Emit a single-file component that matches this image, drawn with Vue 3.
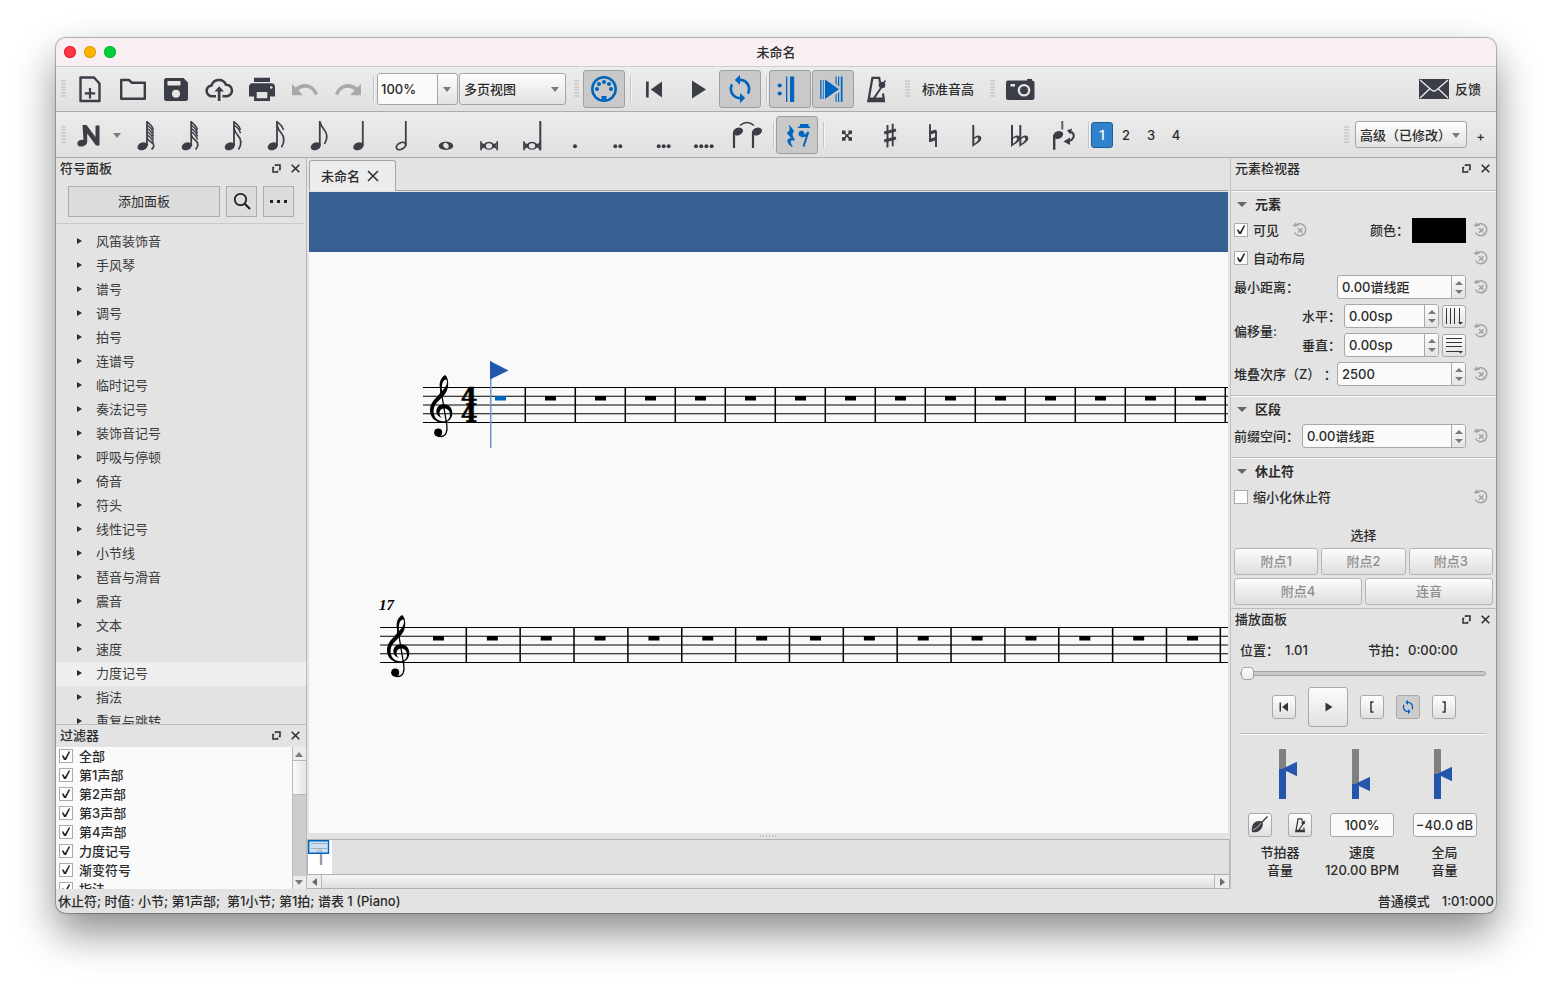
<script setup>
import { ref } from 'vue'

const sync =
  '<path transform="scale(1.3) translate(-12 -12)" fill="currentColor" d="M12 4V1L8 5l4 4V6c3.31 0 6 2.69 6 6 0 1.01-.25 1.97-.7 2.8l1.46 1.46C19.54 15.03 20 13.57 20 12c0-4.42-3.58-8-8-8zm0 14c-3.31 0-6-2.69-6-6 0-1.01.25-1.97.7-2.8L5.24 7.74C4.46 8.97 4 10.43 4 12c0 4.42 3.58 8 8 8v3l4-4-4-4v3z"/>'
const metro =
  '<path fill="none" stroke="currentColor" stroke-width="2.2" d="M4 -6.500L3.200 -11.200H-3.600L-7.700 12.200H8L7 4.500"/><path fill="currentColor" d="M-7.500 8.500H7.500V13H-8.500zM-3 8.800L5.500 -3.500 7 -2.500-.5 8.800z"/><circle cx="6" cy="-4" r="3.300" fill="currentColor"/><path stroke="currentColor" stroke-width="1.500" d="M6 -4L9.500 -8.500"/>'

const fileTools = [
  { label: '新建', svg: '<path fill="none" stroke="currentColor" stroke-width="2.400" stroke-linejoin="round" d="M-9.500 -11.500H4L9.500 -5.500V12H-9.500z"/><path stroke="currentColor" stroke-width="2.200" d="M0 -1V9.500M-5.200 4.300H5.200"/>' },
  { label: '打开', svg: '<path fill="none" stroke="currentColor" stroke-width="2.400" stroke-linejoin="round" d="M-11.800 9.800V-9H-4L-1 -6.200H11.800V9.800z"/>' },
  { label: '保存', svg: '<path fill="currentColor" fill-rule="evenodd" d="M-9.500 -11H7.500L12 -6.500V9.500Q12 12 9.500 12H-9.500Q-12 12-12 9.500V-8.500Q-12-11-9.500-11zM-8.500 -8V-3.500H4.500V-8zM0 .8A4 4 0 1 0 0 8.800A4 4 0 1 0 0 .8z"/>' },
  { label: '保存到云端', svg: '<path fill="none" stroke="currentColor" stroke-width="2.500" d="M-3 7.200H-6.500A5.300 5.300 0 0 1-7.500 -3.500A7.700 7.700 0 0 1 7 -4.300A5.600 5.600 0 0 1 7.500 7.200H3.500"/><path fill="currentColor" d="M-1.200 12V2.500H-4.500L.2 -2.800 5 2.500H1.500V12z"/>' },
  { label: '打印', svg: '<path fill="currentColor" fill-rule="evenodd" d="M-8 -11.200H8V-7H-8zM-9.500 -5.800H9.500Q13 -5.800 13 -2V7.500H8V12H-8V7.500H-13V-2Q-13 -5.800-9.500 -5.800zM-5.300 3V9.300H5.300V3zM9.300 -2.800A1.300 1.300 0 1 0 9.300 -.2A1.300 1.300 0 1 0 9.300 -2.800z"/>' },
  { label: '撤销', off: true, svg: '<path fill="currentColor" d="M-13 -5L-9.300 -1.400C-3 -6.800 8 -7 13 5L10 6.200C6.500 -2.500-1.500 -3-6.500 1.500L-2 6.200H-13z"/>' },
  { label: '重做', off: true, svg: '<path fill="currentColor" transform="scale(-1 1)" d="M-13 -5L-9.300 -1.400C-3 -6.800 8 -7 13 5L10 6.200C6.500 -2.500-1.500 -3-6.500 1.500L-2 6.200H-13z"/>' }
]
const midi = '<circle r="11.700" fill="none" stroke="currentColor" stroke-width="2.500"/><g fill="currentColor"><circle cx="-7" r="2"/><circle cx="-5" cy="-5" r="2"/><circle cy="-7" r="2"/><circle cx="5" cy="-5" r="2"/><circle cx="7" r="2"/><path d="M-2.500 7H2.500V12H-2.500z"/></g>'
const playTools = [
  { label: '回到开头', svg: '<path fill="currentColor" d="M-8 -7.500H-5.300V8.500H-8zM8 -7.500V8.500L-3.200 .5z"/>' },
  { label: '播放', svg: '<path fill="currentColor" d="M-5 -8.500L9 .5L-5 9.500z"/>' },
  { label: '循环播放', on: true, svg: sync }
]
const viewTools = [
  { label: '播放反复', on: true, svg: '<circle cx="-10.300" cy="-3.500" r="2.100" fill="currentColor"/><circle cx="-10.300" cy="4.500" r="2.100" fill="currentColor"/><path fill="currentColor" d="M-4 -12.500H-2.700V13H-4zM0 -12.500H4.200V13H0z"/>' },
  { label: '自动翻页', on: true, svg: '<path fill="currentColor" d="M-12.800 -9H-11.500V10H-12.800zM-10.200 -9H-9.300V10H-10.200zM-8 -9.500L6 .3L-8 10zM2.500 -12.500H3.600V-4L2.500 -5zM2.500 13H3.600V4.500L2.500 5.500zM5 -12.500H6.200V-2.500L5 -3.500zM5 13H6.200V3L5 4zM7.800 -12.500H9.500V13H7.800z"/>' },
  { label: '节拍器', svg: metro }
]

const head = (x, y) => `<ellipse cx="${x}" cy="${y}" rx="5.200" ry="3.800" transform="rotate(-22 ${x} ${y})" fill="currentColor"/>`
const stem = (x) => `<path stroke="currentColor" stroke-width="1.800" d="M${x} -14V11"/>`
const flags = (n, x) => {
  let s = ''
  for (let i = 0; i < n; i++) {
    const y = -13 + i * 3.2
    const k = Math.min(1, (14.5 - y) / 22)
    s += i < n - 1
      ? `<path fill="none" stroke="currentColor" stroke-width="1.500" d="M${x} ${y}Q${x + 5} ${y + 3} ${x + 6.5} ${y + 8}"/>`
      : `<path fill="none" stroke="currentColor" stroke-width="1.700" d="M${x} ${y}Q${x + 1} ${y + 4 * k} ${x + 4} ${y + 7.5 * k}C${x + 8} ${y + 12 * k} ${x + 7.5} ${y + 17 * k} ${x + 4.5} ${y + 22 * k}"/>`
  }
  return s
}
const dots = (xs) => xs.map((x) => `<circle cx="${x}" cy="11.300" r="2" fill="currentColor"/>`).join('')
const whole = '<path fill="currentColor" fill-rule="evenodd" d="M-2 6.700C2 6.700 5.200 8.300 5.200 10.800S2 14.900-2 14.900-9.200 13.300-9.200 10.800-6 6.700-2 6.700zM-3.300 7.900C-5.300 8.300-5.200 11-3.700 12.600S-.2 14 .5 12.600.5 9.600-.5 8.700-2.500 7.700-3.300 7.900z"/>'
const breve = '<path stroke="currentColor" stroke-width="1.700" d="M-10 6.300V15.300M6.200 6.300V15.300"/><path fill="currentColor" fill-rule="evenodd" d="M-9.500 7.700L-7 9Q-5 6.800-2 6.800T3 9L5.500 7.700V9.500L4.600 10.800 5.500 12V13.900L3 12.600Q1 14.800-2 14.800T-7 12.600L-9.500 13.900V12L-8.600 10.800-9.500 9.500zM-2 8.200A2.700 2.700 0 1 0 -2 13.500A2.700 2.700 0 1 0 -2 8.200z"/>'
const flat = (x) => `<path fill="currentColor" fill-rule="evenodd" d="M${x} -10H${x + 2}V2.500C${x + 5} -.500 ${x + 9} 0 ${x + 9} 3.500C${x + 9} 7 ${x + 4} 8.500 ${x} 12zM${x + 2} 4.200V8.700C${x + 5} 6.700 ${x + 6} 5.500 ${x + 6} 3.800C${x + 6} 2 ${x + 3.500} 2.300 ${x + 2} 4.200z"/>`

const noteTools = [
  { label: '128分音符', svg: head(-4.5, 11.3) + stem(0) + flags(6, 0) },
  { label: '64分音符', svg: head(-3.3, 11.3) + stem(1.2) + flags(5, 1) },
  { label: '32分音符', svg: head(-3.3, 11.3) + stem(1) + flags(3, 1) },
  { label: '16分音符', svg: head(-3.3, 11.3) + stem(1) + flags(2, 1) },
  { label: '8分音符', svg: head(-3.3, 11.3) + stem(0.8) + flags(1, 1) },
  { label: '4分音符', svg: head(-3.7, 11.3) + stem(0.8) },
  { label: '2分音符', svg: '<ellipse cx="-4" cy="11" rx="5" ry="3.200" transform="rotate(-28 -4 11)" fill="none" stroke="currentColor" stroke-width="1.800"/>' + stem(0.8) },
  { label: '全音符', svg: whole },
  { label: '倍全音符', svg: breve },
  { label: '四倍全音符', svg: breve + '<path stroke="currentColor" stroke-width="2" d="M6.300 -14V15.300"/>' },
  { label: '附点', svg: dots([-2]) },
  { label: '双附点', svg: dots([-4.7, 0.3]) },
  { label: '三附点', svg: dots([-4.3, 0.7, 5.7]) },
  { label: '四附点', svg: dots([-10, -4.8, 0.4, 5.6]) },
  { label: '延音线', svg: head(-11, -3.5) + head(8, -3.5) + '<path stroke="currentColor" stroke-width="2.200" d="M-15 -3V13M4 -3V13"/><path fill="none" stroke="currentColor" stroke-width="1.600" d="M-9 -9.500Q-2 -15.500 5 -9.500"/>' }
]
const restSvg = '<path fill="currentColor" d="M-7.500 -10L-2.800 -4C-4.500 -2-5.500 0-2 5L-3 5.800C-6.500 4-7.500 7.500-4.300 11L-5 12C-11 8-11 3-5.800 3.300L-10.200 -2C-7 -4.500-6.500 -6.500-8.300 -9.500z"/><path fill="currentColor" d="M3 -11H11.500V-8.500H13V-7H1V-8.500H3z"/><circle cx="4.500" cy="-1.300" r="2.900" fill="currentColor"/><path fill="none" stroke="currentColor" stroke-width="2" d="M4.500 1.300Q9 1.500 11.300 -3L6.500 11.500"/>'
const accTools = [
  { label: '重升', svg: '<path fill="currentColor" d="M-5 -4.500H-1.500L-1.300 -1.500 0 -.600 1.300 -1.500 1.500 -4.500H5V-1L2.200 -.700 1.400 .600 2.200 2 5 2.300V5.700H1.500L1.300 2.800 0 1.900-1.300 2.800-1.500 5.700H-5V2.300L-2.200 2-1.400 .600-2.200 -.700-5 -1z"/>' },
  { label: '升', svg: '<path stroke="currentColor" stroke-width="1.900" d="M-2.500 -10V12.500M2.700 -11.300V11.200"/><path stroke="currentColor" stroke-width="3" d="M-5.800 -2L6 -5M-5.800 6L6 3"/>' },
  { label: '还原', svg: '<path fill="none" stroke="currentColor" stroke-width="1.900" d="M-3 -10.700V7M3 -4.500V12"/><path stroke="currentColor" stroke-width="2.900" d="M-3 -2L3 -4M-3 5.500L3 3.500"/>' },
  { label: '降', svg: flat(-3.7) },
  { label: '重降', svg: flat(-8) + flat(0.3) },
  { label: '翻转方向', svg: head(-3.8, 0) + '<path stroke="currentColor" stroke-width="2.400" d="M-7.800 0V14.700"/><path stroke="currentColor" stroke-width="2" opacity=".8" d="M.3 -14V-5.500"/><path fill="none" stroke="currentColor" stroke-width="2" d="M6.500 -3.500C12 -3.500 13.500 1.500 9.500 5L4.500 7.200"/><path fill="currentColor" d="M5 -4.800L10 -6.500 8.500 -.500zM8 2.500L1.500 6.500 8 10z"/>' }
]
const nSvg = '<path fill="currentColor" d="M-7.500 -10H-3.500L5.500 2V-9.500H9.500V10.500H6L-2.800 -1.500V6.500C-2.800 10-6 11.500-9 11.500S-13 9.500-12.500 7.500-9.500 4.200-6.500 4.800z"/>'

const palettes = ['风笛装饰音', '手风琴', '谱号', '调号', '拍号', '连谱号', '临时记号', '奏法记号', '装饰音记号', '呼吸与停顿', '倚音', '符头', '线性记号', '小节线', '琶音与滑音', '震音', '文本', '速度', '力度记号', '指法', '重复与跳转']
const filters = ref(['全部', '第1声部', '第2声部', '第3声部', '第4声部', '力度记号', '渐变符号', '指法'].map((t) => ({ t, on: true })))
const voices = ['1', '2', '3', '4']

const clef = 'M15.200 0C17.500 2 18.300 5.500 18.200 9C18 17 14 20.500 9.500 25C6 28.500 3.600 31 3.600 36.500C3.600 42.500 8 46.300 13 46.300C17.500 46.300 20 43.500 20 40C20 36 17.500 33.600 14.300 33.600C11.300 33.600 9.500 35.700 9.500 38C9.500 40.500 10.500 42 12.300 43.200C8.500 42 6.300 39.500 6.300 36.500C6.300 32 9.500 29.200 14 29.200C19 29.200 22.300 33 22.300 38C22.300 44 18 47.600 12.500 47.600C5.500 47.600 0 42.500 0 35.500C0 29 3.500 25 7.500 21.200C10 18.800 10.600 18 10 14C8.800 8 10.500 2.500 15.200 0ZM15.800 4.500C12.500 5.500 11.500 9.500 12 16C15 13 17 10 17 7C17 5.500 16.500 4.500 15.800 4.500Z'
const staves = [
  { y: 135, x: 114, clefX: 121, bar: 216.3, pitch: 50, count: 15, rest: 186, active: true },
  { y: 375, x: 71, clefX: 78, bar: 157.3, pitch: 53.86, count: 15, rest: 124 }
]
const lines = [0.5, 9.25, 18, 26.75, 35.5]
</script>

<template>
  <div class="desktop">
    <div class="window">
      <header class="titlebar">
        <button class="light red" aria-label="关闭"></button>
        <button class="light amber" aria-label="最小化"></button>
        <button class="light green" aria-label="缩放"></button>
        <h1>未命名</h1>
      </header>

      <div class="toolbar">
        <i class="grip"></i>
        <button v-for="t in fileTools" :key="t.label" class="tool" :class="{ off: t.off }" :aria-label="t.label">
          <svg viewBox="-21 -19 42 38" v-html="t.svg"></svg>
        </button>
        <i class="sep first"></i>
        <span class="combo zoom"><input type="text" value="100%" aria-label="缩放比例" /><button aria-label="缩放选项"></button></span>
        <span class="combo view"><select aria-label="视图"><option>多页视图</option></select></span>
        <i class="grip mid"></i>
        <button class="tool on" aria-label="MIDI 输入"><svg viewBox="-21 -19 42 38" v-html="midi"></svg></button>
        <i class="sep"></i>
        <button v-for="t in playTools" :key="t.label" class="tool" :class="{ on: t.on }" :aria-label="t.label">
          <svg viewBox="-21 -19 42 38" v-html="t.svg"></svg>
        </button>
        <i class="sep"></i>
        <button v-for="t in viewTools" :key="t.label" class="tool" :class="{ on: t.on }" :aria-label="t.label">
          <svg viewBox="-21 -19 42 38" v-html="t.svg"></svg>
        </button>
        <i class="grip wide"></i>
        <button class="textbtn">标准音高</button>
        <i class="grip wide"></i>
        <button class="tool cam" aria-label="图像捕捉">
          <svg viewBox="-21 -19 42 38"><path fill="currentColor" fill-rule="evenodd" d="M-12 -8.500H7V-10H12V-8.500Q14.500 -8.500 14.500 -6V9Q14.500 11 12 11H-12Q-14 11-14 9V-6.500Q-14 -8.500-12 -8.500zM-9.500 -5V-2.500H-5V-5zM4 -5A6.300 6.300 0 1 0 4 7.600A6.300 6.300 0 1 0 4 -5zM4 -2.700A4 4 0 1 1 4 5.300A4 4 0 1 1 4 -2.700z" /></svg>
        </button>
        <span class="grow"></span>
        <button class="feedback">
          <svg viewBox="0 0 30 20"><path fill="#3b3e47" d="M0 0H30V20H0z" /><path fill="none" stroke="#e8e8e8" stroke-width="1.400" d="M1 1L12.500 11Q15 13 17.500 11L29 1M1 19L11 9.500M29 19L19 9.500" /></svg>
          反馈
        </button>
      </div>

      <div class="toolbar second">
        <i class="grip"></i>
        <button class="tool" aria-label="音符输入"><svg viewBox="-21 -19 42 38" v-html="nSvg"></svg></button>
        <button class="drop" aria-label="输入模式"></button>
        <button v-for="t in noteTools" :key="t.label" class="tool" :aria-label="t.label">
          <svg viewBox="-21 -19 42 38" v-html="t.svg"></svg>
        </button>
        <i class="sep note"></i>
        <button class="tool on" aria-label="休止符"><svg viewBox="-21 -19 42 38" v-html="restSvg"></svg></button>
        <i class="sep"></i>
        <button v-for="t in accTools" :key="t.label" class="tool" :aria-label="t.label">
          <svg viewBox="-21 -19 42 38" v-html="t.svg"></svg>
        </button>
        <i class="sep"></i>
        <button v-for="v in voices" :key="v" class="voice" :class="{ cur: v === '1' }">{{ v }}</button>
        <span class="grow"></span>
        <i class="grip work"></i>
        <span class="combo space"><select aria-label="工作区"><option>高级（已修改）</option></select></span>
        <button class="plus">+</button>
      </div>

      <main class="body">
        <aside class="left">
          <section class="palette">
            <div class="dockhead">
              <h2>符号面板</h2>
              <button aria-label="浮动"><svg viewBox="0 0 9 9"><path d="M3.500 2V1H8V5.500H6.800M2.200 3.500H1V8H5.500V6.800" /></svg></button>
              <button aria-label="关闭面板"><svg viewBox="0 0 9 9"><path d="M.700 .700L8.300 8.300M8.300 .700L.700 8.300" /></svg></button>
            </div>
            <div class="paltools">
              <button class="add">添加面板</button>
              <button class="sq" aria-label="搜索"><svg viewBox="0 0 18 18"><circle cx="7.500" cy="7.500" r="5.700" fill="none" stroke="#222" stroke-width="1.800" /><path stroke="#222" stroke-width="2.200" d="M11.500 11.500L17 17" /></svg></button>
              <button class="sq" aria-label="更多"><svg viewBox="0 0 18 18"><path fill="#222" d="M0 8H3V11H0zM7 8H10V11H7zM14 8H17V11H14z" /></svg></button>
            </div>
            <ul class="tree">
              <li v-for="p in palettes" :key="p" :class="{ hover: p === '力度记号' }">{{ p }}</li>
            </ul>
          </section>
          <section class="filter">
            <div class="dockhead">
              <h2>过滤器</h2>
              <button aria-label="浮动"><svg viewBox="0 0 9 9"><path d="M3.500 2V1H8V5.500H6.800M2.200 3.500H1V8H5.500V6.800" /></svg></button>
              <button aria-label="关闭面板"><svg viewBox="0 0 9 9"><path d="M.700 .700L8.300 8.300M8.300 .700L.700 8.300" /></svg></button>
            </div>
            <div class="checks">
              <div class="checklist">
                <label v-for="f in filters" :key="f.t"><input v-model="f.on" type="checkbox" />{{ f.t }}</label>
              </div>
              <div class="vbar"><button class="up" aria-label="向上"></button><i></i><span></span><button class="down" aria-label="向下"></button></div>
            </div>
          </section>
        </aside>

        <section class="center">
          <div class="tabs">
            <div class="tab">未命名<button aria-label="关闭标签"><svg viewBox="0 0 12 12"><path d="M1 1L11 11M11 1L1 11" /></svg></button></div>
            <div class="tabline"></div>
          </div>
          <div class="banner"></div>
          <svg class="score" aria-label="乐谱">
            <g v-for="s in staves" :key="s.y">
              <line v-for="l in lines" :key="l" :x1="s.x" x2="100%" :y1="s.y + l" :y2="s.y + l" class="ln" />
              <line v-for="n in s.count" :key="n" :x1="s.bar + (n - 1) * s.pitch" :x2="s.bar + (n - 1) * s.pitch" :y1="s.y" :y2="s.y + 36" class="bar" />
              <rect v-for="n in s.count" :key="'r' + n" :x="s.rest + (n - 1) * s.pitch" :y="s.y + 9" width="11" height="4.500" :fill="n === 1 && s.active ? '#0065bf' : '#000'" />
              <g :transform="`translate(${s.clefX} ${s.y - 12})`">
                <path :d="clef" fill-rule="evenodd" />
                <circle cx="8.200" cy="57.500" r="4" />
                <path fill="none" stroke="#000" stroke-width="1.300" d="M10.800 14L16.800 50C17.800 57 15.500 61.300 11.500 61.500C8 61.500 5.500 60 4.800 57" />
              </g>
            </g>
            <text x="160" y="153" text-anchor="middle" class="time">4</text>
            <text x="160" y="170" text-anchor="middle" class="time">4</text>
            <text x="70" y="358" class="num">17</text>
            <path fill="#6f93cb" d="M181 109H182.500V196H181z" />
            <path fill="#2457ac" d="M181 109L199.500 118.500L181 127.500z" />
          </svg>
          <div class="split"><i></i></div>
          <div class="navigator">
            <svg viewBox="0 0 26 34"><path fill="#fff" d="M0 0H24V34H0z" /><text x="7" y="25">1</text><path fill="#bcd7ef" fill-opacity=".75" stroke="#0065bf" stroke-width="1.400" d="M.700 .700H20.500V13.300H.700z" /><path stroke="#8b98a5" stroke-width=".7" d="M3 3.500H19M3 8.500H19" /></svg>
          </div>
          <div class="hbar"><button class="lft" aria-label="向左"></button><i></i><button class="rgt" aria-label="向右"></button></div>
        </section>

        <aside class="right">
          <div class="dockhead tall">
            <h2>元素检视器</h2>
            <button aria-label="浮动"><svg viewBox="0 0 9 9"><path d="M3.500 2V1H8V5.500H6.800M2.200 3.500H1V8H5.500V6.800" /></svg></button>
            <button aria-label="关闭面板"><svg viewBox="0 0 9 9"><path d="M.700 .700L8.300 8.300M8.300 .700L.700 8.300" /></svg></button>
          </div>
          <section class="group">
            <h3>元素</h3>
            <div class="row">
              <label><input type="checkbox" checked />可见</label>
              <button class="reset vis" aria-label="重置可见"><svg viewBox="0 0 16 16"><path d="M4 3A6 6 0 1 1 2.500 10.500M1 3.300H6.500M3.500 .8V5M6 6.200L10.600 10.800M10.600 6.200L6 10.800" /></svg></button>
              <span class="grow"></span>
              <label for="col" class="collabel">颜色：</label><button id="col" class="swatch"></button>
              <button class="reset" aria-label="重置颜色"><svg viewBox="0 0 16 16"><path d="M4 3A6 6 0 1 1 2.500 10.500M1 3.300H6.500M3.500 .8V5M6 6.200L10.600 10.800M10.600 6.200L6 10.800" /></svg></button>
            </div>
            <div class="row">
              <label><input type="checkbox" checked />自动布局</label>
              <span class="grow"></span>
              <button class="reset" aria-label="重置布局"><svg viewBox="0 0 16 16"><path d="M4 3A6 6 0 1 1 2.500 10.500M1 3.300H6.500M3.500 .8V5M6 6.200L10.600 10.800M10.600 6.200L6 10.800" /></svg></button>
            </div>
            <div class="row high">
              <label for="dist" class="w103">最小距离：</label>
              <span class="spin"><input id="dist" type="text" value="0.00谱线距" /><button aria-label="调整"></button></span>
              <button class="reset" aria-label="重置距离"><svg viewBox="0 0 16 16"><path d="M4 3A6 6 0 1 1 2.500 10.500M1 3.300H6.500M3.500 .8V5M6 6.200L10.600 10.800M10.600 6.200L6 10.800" /></svg></button>
            </div>
            <div class="row offset">
              <span class="w68">偏移量:</span>
              <div class="pair">
                <div class="row sub">
                  <label for="hx">水平：</label>
                  <span class="spin"><input id="hx" type="text" value="0.00sp" /><button aria-label="调整"></button></span>
                  <button class="snap" aria-label="水平网格"><svg viewBox="0 0 22 22"><path d="M3.500 2V18M7.500 2V18M11.500 2V18M16.500 2V18" /><path d="M15 16H20L17.500 18.500z" fill="#333" stroke="none" /></svg></button>
                </div>
                <div class="row sub">
                  <label for="vy">垂直：</label>
                  <span class="spin"><input id="vy" type="text" value="0.00sp" /><button aria-label="调整"></button></span>
                  <button class="snap" aria-label="垂直网格"><svg viewBox="0 0 22 22"><path d="M3 3.500H19M3 7.500H19M3 11.500H19M3 16.500H19" /><path d="M15 16H20L17.500 18.500z" fill="#333" stroke="none" /></svg></button>
                </div>
              </div>
              <button class="reset" aria-label="重置偏移"><svg viewBox="0 0 16 16"><path d="M4 3A6 6 0 1 1 2.500 10.500M1 3.300H6.500M3.500 .8V5M6 6.200L10.600 10.800M10.600 6.200L6 10.800" /></svg></button>
            </div>
            <div class="row">
              <label for="z" class="w103">堆叠次序（Z） ：</label>
              <span class="spin"><input id="z" type="text" value="2500" /><button aria-label="调整"></button></span>
              <button class="reset" aria-label="重置次序"><svg viewBox="0 0 16 16"><path d="M4 3A6 6 0 1 1 2.500 10.500M1 3.300H6.500M3.500 .8V5M6 6.200L10.600 10.800M10.600 6.200L6 10.800" /></svg></button>
            </div>
          </section>
          <section class="group">
            <h3>区段</h3>
            <div class="row high">
              <label for="lead" class="w68">前缀空间：</label>
              <span class="spin"><input id="lead" type="text" value="0.00谱线距" /><button aria-label="调整"></button></span>
              <button class="reset" aria-label="重置空间"><svg viewBox="0 0 16 16"><path d="M4 3A6 6 0 1 1 2.500 10.500M1 3.300H6.500M3.500 .8V5M6 6.200L10.600 10.800M10.600 6.200L6 10.800" /></svg></button>
            </div>
          </section>
          <section class="group last">
            <h3>休止符</h3>
            <div class="row">
              <label><input type="checkbox" />缩小化休止符</label>
              <span class="grow"></span>
              <button class="reset" aria-label="重置休止符"><svg viewBox="0 0 16 16"><path d="M4 3A6 6 0 1 1 2.500 10.500M1 3.300H6.500M3.500 .8V5M6 6.200L10.600 10.800M10.600 6.200L6 10.800" /></svg></button>
            </div>
            <p>选择</p>
            <div class="btns"><button disabled>附点1</button><button disabled>附点2</button><button disabled>附点3</button></div>
            <div class="btns"><button disabled>附点4</button><button disabled>连音</button></div>
          </section>
          <section class="play">
            <div class="dockhead">
              <h2>播放面板</h2>
              <button aria-label="浮动"><svg viewBox="0 0 9 9"><path d="M3.500 2V1H8V5.500H6.800M2.200 3.500H1V8H5.500V6.800" /></svg></button>
              <button aria-label="关闭面板"><svg viewBox="0 0 9 9"><path d="M.700 .700L8.300 8.300M8.300 .700L.700 8.300" /></svg></button>
            </div>
            <div class="pos"><span>位置：</span><span class="v">1.01</span><span class="beat">节拍：</span><span class="v2">0:00:00</span></div>
            <input class="seek" type="range" min="0" max="100" value="0" aria-label="播放位置" />
            <div class="transport">
              <button aria-label="回到开头"><svg viewBox="-12 -12 24 24"><path fill="currentColor" d="M-4.500 -4.500H-3V4.500H-4.500zM4 -4.500V4.500L-2 0z" /></svg></button>
              <button class="big" aria-label="播放"><svg viewBox="-12 -12 24 24"><path fill="currentColor" d="M-2.500 -4.500L4.500 0L-2.500 4.500z" /></svg></button>
              <button aria-label="循环起点"><svg viewBox="-12 -12 24 24"><path fill="none" stroke="currentColor" stroke-width="1.500" d="M1.500 -5H-1V5H1.500" /></svg></button>
              <button class="on" aria-label="循环"><svg viewBox="-24 -24 48 48" v-html="sync"></svg></button>
              <button aria-label="循环终点"><svg viewBox="-12 -12 24 24"><path fill="none" stroke="currentColor" stroke-width="1.500" d="M-1.500 -5H1V5H-1.500" /></svg></button>
            </div>
            <hr />
            <div class="mix">
              <div class="ch">
                <svg class="fader" viewBox="0 0 24 50"><path fill="#808080" d="M0 0H7V20H0z" /><path fill="#2457ac" d="M0 20H7V50H0zM3 20L18 12.700V27.300z" /></svg>
                <div class="mini">
                  <button aria-label="强拍"><svg viewBox="-12 -12 24 24"><path fill="#3b3e47" d="M-8 7C-9 1-6.500 -4.500 0 -4C3.500 -3.500 3.500 0 1.500 3.500C-1 7-5 8-8 7z" /><path fill="none" stroke="#3b3e47" stroke-width="1.400" d="M1 -2L7.500 -8.500" /><path fill="none" stroke="#d8d8d8" stroke-width=".8" d="M-7 5Q-2 3 1 -2" /></svg></button>
                  <button aria-label="节拍器"><svg viewBox="-22 -22 44 44" v-html="metro"></svg></button>
                </div>
                <p>节拍器</p><p>音量</p>
              </div>
              <div class="ch">
                <svg class="fader" viewBox="0 0 24 50"><path fill="#808080" d="M0 0H7V35H0z" /><path fill="#2457ac" d="M0 35H7V50H0zM3 35L18 27.700V42.300z" /></svg>
                <input type="text" value="100%" aria-label="速度" />
                <p>速度</p><p>120.00 BPM</p>
              </div>
              <div class="ch">
                <svg class="fader" viewBox="0 0 24 50"><path fill="#808080" d="M0 0H7V25H0z" /><path fill="#2457ac" d="M0 25H7V50H0zM3 25L18 17.700V32.300z" /></svg>
                <input type="text" value="−40.0 dB" aria-label="全局音量" />
                <p>全局</p><p>音量</p>
              </div>
            </div>
          </section>
        </aside>
      </main>

      <footer class="status">
        <span>休止符; 时值: 小节; 第1声部;&nbsp; 第1小节; 第1拍; 谱表 1 (Piano)</span>
        <span class="grow"></span>
        <span>普通模式</span><span>1:01:000</span>
      </footer>
    </div>
  </div>
</template>

<style>
body { background: #fff; }
</style>

<style scoped>
*, *::before, *::after { box-sizing: border-box; }
.desktop {
  height: 100vh; min-height: 780px; min-width: 1300px; padding: 38px 56px 74px; display: flex;
  font: 500 13px/18px Inter, "Noto Sans CJK SC", sans-serif; color: #2b2b2b; overflow: hidden;
}
button, input, select { font: inherit; color: inherit; margin: 0; padding: 0; border: 0; background: none; outline: none; }
h1, h2, h3, p, ul { margin: 0; padding: 0; font: inherit; }
button { flex: none; }
svg { display: block; flex: none; }
.grow { flex: 1; }
.window {
  flex: 1; min-width: 0; display: flex; flex-direction: column; border-radius: 10px; overflow: hidden; background: #e3e3e3;
  box-shadow: 0 0 0 1px rgba(0, 0, 0, .2), 0 0 3px rgba(0, 0, 0, .2), 0 20px 42px rgba(0, 0, 0, .45);
}
.titlebar { height: 29px; flex: none; background: #f7eff2; border-bottom: 1px solid #cdcaca; display: flex; align-items: center; gap: 8px; padding: 0 8px 1px; }
.light { width: 12px; height: 12px; border-radius: 50%; }
.red { background: #fd3545; box-shadow: inset 0 0 0 1px #e12235; }
.amber { background: #fdb400; box-shadow: inset 0 0 0 1px #e09c1a; }
.green { background: #00cf3c; box-shadow: inset 0 0 0 1px #10b534; }
h1 { flex: 1; text-align: center; padding-right: 60px; }

.toolbar { height: 45px; flex: none; display: flex; align-items: center; gap: 1px; padding: 0 15px 0 5px; border-bottom: 1px solid #acacac; background: linear-gradient(#ececec, #e0e0e0); }
.second { height: 46px; padding-right: 3px; }
.grip { width: 5px; height: 18px; flex: none; margin-right: 2px; background: radial-gradient(circle at 1px 1px, #b8b8b8 0 .6px, transparent .8px) 0 0 / 2px 3px; }
.mid { margin: 0 3px 0 7px; }
.wide { margin: 0 7px; }
.work { margin-right: 5px; }
.tool { width: 42px; height: 38px; border: 1px solid transparent; border-radius: 3px; color: #3b3e47; }
.tool svg { width: 42px; height: 38px; margin: -1px; }
.tool.on { background: #c9c9c9; border-color: #9f9f9f; color: #0065bf; }
.tool.off { color: #a9a9a9; }
.sep { width: 2px; height: 26px; flex: none; margin: 0 0 0 4px; background: #c4c4c4; border-right: 1px solid #f5f5f5; }
.first { margin-left: 3px; margin-right: 1px; }
.note { margin-left: 2px; }
.cam { margin-left: -4px; }
.combo { height: 32px; display: flex; flex: none; position: relative; border: 1px solid #a5a5a5; border-radius: 3px; background: linear-gradient(#fdfdfd, #e2e2e2); overflow: hidden; }
.combo::after, .drop::after { content: ""; position: absolute; right: 6px; top: 50%; margin-top: -2px; border: 4px solid transparent; border-top: 5px solid #7a7a7a; border-bottom: 0; pointer-events: none; }
.zoom { width: 81px; }
.zoom input { width: 60px; padding-left: 3px; background: #fafafa; border-right: 1px solid #a5a5a5; }
.zoom button { flex: 1; }
.view { width: 107px; }
.combo select { appearance: none; width: 100%; padding-left: 4px; }
.space { width: 112px; height: 27px; }
.textbtn { padding: 0 8px 0 4px; }
.feedback { display: flex; align-items: center; gap: 6px; }
.feedback svg { width: 30px; height: 20px; }
.drop { width: 14px; height: 38px; position: relative; margin-right: -1px; }
.drop::after { right: 5px; }
.voice { width: 22px; height: 26px; border-radius: 3px; margin-right: 2px; border: 1px solid transparent; }
.voice.cur { background: #3182cb; border-color: #1a5f9f; color: #fff; margin-right: 1px; }
.plus { width: 25px; padding-top: 2px; }

.body { flex: 1; min-height: 0; display: flex; }
.left { width: 251px; flex: none; border-right: 1px solid #b9b9b9; display: flex; flex-direction: column; }
.palette { flex: 1; min-height: 0; display: flex; flex-direction: column; }
.dockhead { height: 22px; flex: none; display: flex; align-items: center; gap: 10px; padding: 0 6px 2px 4px; }
.dockhead h2 { flex: 1; }
.dockhead svg, .tab svg { width: 9px; height: 9px; fill: none; stroke: #2b2b2b; stroke-width: 1.500; }
.dockhead.tall { height: 33px; padding-bottom: 12px; border-bottom: 1px solid #bcbcbc; }
.paltools { display: flex; gap: 6px; padding: 6px 10px 6px 12px; margin: 0 2px 0 0; border-bottom: 1px solid #c9c9c9; }
.paltools button { height: 31px; border: 1px solid #adadad; background: #dcdcdc; font-weight: 400; padding-bottom: 2px; }
.add { flex: 1; }
.paltools .sq { width: 31px; display: flex; align-items: center; justify-content: center; }
.sq svg { width: 18px; height: 18px; }
.tree { flex: 1; min-height: 0; overflow: hidden; padding-top: 6px; list-style: none; font-weight: 400; color: #3a3a3a; }
.tree li { height: 24px; padding: 0 0 2px 21px; display: flex; align-items: center; gap: 14px; }
.tree li::before { content: ""; border: 3px solid transparent; border-left: 5px solid #2b2b2b; border-right: 0; }
.tree li.hover { background: #efefef; }
.filter { flex: none; border-top: 1px solid #bcbcbc; }
.checks { display: flex; height: 142px; background: #fafafa; }
.checklist { flex: 1; overflow: hidden; padding-left: 3px; }
.checklist label { height: 19px; padding-bottom: 1px; }
label { display: flex; align-items: center; gap: 6px; }
.row label { gap: 5px; }
input[type="checkbox"] { appearance: none; width: 14px; height: 14px; flex: none; border: 1px solid #ababab; background: #fdfdfd; display: block; }
input[type="checkbox"]:checked::after { content: ""; display: block; width: 12px; height: 12px; background: #222; clip-path: polygon(2px 6px, 3px 5px, 5px 8px, 9px 1px, 10px 2px, 6px 10px, 4px 10px); }
.vbar { width: 14px; background: #cdcdcd; border-left: 1px solid #b9b9b9; display: flex; flex-direction: column; }
.vbar button { height: 13px; position: relative; background: #ececec; }
.vbar i { height: 35px; background: linear-gradient(90deg, #fafafa, #e4e4e4); border: 1px solid #b9b9b9; border-width: 1px 0; }
.vbar span { flex: 1; }
.vbar .up::after { content: ""; position: absolute; left: 2px; top: 5px; border: 4px solid transparent; border-bottom: 5px solid #7a7a7a; border-top: 0; }
.vbar .down::after { content: ""; position: absolute; left: 2px; top: 4px; border: 4px solid transparent; border-top: 5px solid #7a7a7a; border-bottom: 0; }

.center { flex: 1; min-width: 0; display: flex; flex-direction: column; }
.tabs { height: 34px; flex: none; display: flex; padding: 2px 2px 0; }
.tab { width: 87px; border: 1px solid #a5a5a5; border-bottom: 0; border-radius: 3px 3px 0 0; background: #ececec; display: flex; align-items: center; gap: 7px; padding-left: 11px; height: 31px; }
.tab svg { width: 12px; height: 12px; }
.tabline { flex: 1; height: 31px; border-bottom: 1px solid #a5a5a5; }
.banner { height: 60px; flex: none; background: #375f92; margin: 0 2px; }
.score { flex: 1 1 0; min-height: 0; width: calc(100% - 4px); margin: 0 2px; background: #f9f9f9; overflow: hidden; }
.ln { stroke: #000; stroke-width: 1; }
.bar { stroke: #000; stroke-width: 1.500; }
.time { font: bold 24px "DejaVu Serif", serif; fill: #000; stroke: #000; stroke-width: .6; }
.num { font: italic bold 15px "Liberation Serif", serif; fill: #000; }
.split { height: 6px; flex: none; display: flex; justify-content: center; align-items: center; }
.split i { width: 17px; height: 2px; background: repeating-linear-gradient(90deg, #b5b5b5 0 1px, transparent 1px 3px); }
.navigator { flex: none; height: 36px; border: 1px solid #b0b0b0; background: #e0e0e0; }
.navigator svg { width: 26px; height: 34px; }
.navigator text { font: 22px Inter, sans-serif; fill: #929292; }
.hbar { height: 14px; flex: none; display: flex; border: 1px solid #b0b0b0; border-width: 0 1px 1px 0; background: #ececec; }
.hbar button { width: 14px; position: relative; }
.hbar i { flex: 1; background: linear-gradient(#f6f6f6, #dedede); border: 1px solid #b9b9b9; border-width: 0 1px; }
.hbar .lft::after, .hbar .rgt::after { content: ""; position: absolute; left: 5px; top: 3px; border: 4px solid transparent; }
.hbar .lft::after { border-right: 5px solid #6a6a6a; border-left: 0; }
.hbar .rgt::after { border-left: 5px solid #6a6a6a; border-right: 0; }

.right { width: 266px; flex: none; border-left: 1px solid #c2c2c2; }
.group { border-top: 1px solid #fafafa; border-bottom: 1px solid #bcbcbc; padding: 0 7px 7px 3px; }
.group + .group { padding-bottom: 6px; }
.group.last { padding: 0 3px 0; }
.group.last .row { padding-right: 4px; }
h3 { height: 24px; display: flex; align-items: center; gap: 8px; padding-left: 4px; font-weight: 700; }
h3::before { content: ""; border: 5px solid transparent; border-top: 5px solid #666; border-bottom: 0; margin-left: -1px; }
.row { height: 28px; display: flex; align-items: center; }
.row.high { height: 30px; }
.row.offset { height: 58px; padding-bottom: 1px; }
.row label { white-space: nowrap; }
.reset { width: 16px; height: 16px; margin-left: 7px; }
.reset svg { width: 16px; height: 16px; fill: none; stroke: #a3a3a3; stroke-width: 1.500; }
.vis { margin-left: 13px; }
.swatch { width: 54px; height: 25px; background: #000; }
.collabel { width: 42px; }
.w103 { width: 103px; flex: none; }
.w68 { width: 68px; flex: none; }
.spin { flex: 1; min-width: 0; height: 24px; display: flex; border: 1px solid #a8a8a8; border-radius: 3px; background: #fafafa; overflow: hidden; }
.spin input { flex: 1; min-width: 0; width: 0; padding-left: 4px; }
.spin button { width: 14px; border-left: 1px solid #a8a8a8; background: linear-gradient(#fdfdfd, #e4e4e4); display: flex; flex-direction: column; align-items: center; justify-content: center; gap: 5px; }
.spin button::before { content: ""; border: 4px solid transparent; border-bottom: 4px solid #7a7a7a; border-top: 0; }
.spin button::after { content: ""; border: 4px solid transparent; border-top: 4px solid #7a7a7a; border-bottom: 0; }
.pair { flex: 1; min-width: 0; }
.row.sub { height: 29px; }
.sub label { width: 42px; flex: none; }
.snap { width: 24px; height: 23px; margin-left: 3px; border: 1px solid #a8a8a8; border-radius: 3px; background: linear-gradient(#fdfdfd, #e2e2e2); }
.snap svg { width: 22px; height: 22px; fill: none; stroke: #333; stroke-width: 1; }
.group.last p { height: 24px; line-height: 24px; margin: 12px 0 1px; text-align: center; }
.btns { display: flex; gap: 3px; padding-bottom: 3px; }
.btns button { flex: 1 1 0; height: 27px; padding-bottom: 2px; border: 1px solid #b4b4b4; border-radius: 3px; background: linear-gradient(#fcfcfc, #dedede); color: #8d8d8d; }
.pos { display: flex; height: 24px; line-height: 24px; margin-top: 7px; padding-left: 9px; white-space: pre; }
.pos .v { margin-left: 6px; width: 83px; }
.pos .v2 { margin-left: 1px; }
.pos span:first-child { width: 39px; }
.pos .beat { width: 39px; }
.seek { appearance: none; display: block; height: 12px; margin: 5px 10px 0 9px; width: calc(100% - 19px); }
.seek::-webkit-slider-runnable-track { height: 5px; border: 1px solid #a3a3a3; border-radius: 3px; background: #c8c8c8; }
.seek::-webkit-slider-thumb { appearance: none; width: 13px; height: 13px; margin-top: -5px; border: 1px solid #a3a3a3; border-radius: 4px; background: linear-gradient(#fff, #eaeaea); }
.transport { height: 40px; margin-top: 8px; display: flex; align-items: center; justify-content: center; gap: 12px; }
.transport button, .mini button { width: 24px; height: 24px; border: 1px solid #a8a8a8; border-radius: 3px; background: linear-gradient(#fdfdfd, #e0e0e0); color: #33363d; display: flex; align-items: center; justify-content: center; }
.transport .big { width: 40px; height: 40px; }
.transport .on { background: #cdcdcd; color: #0065bf; }
.transport svg, .mini svg { width: 24px; height: 24px; }
hr { margin: 6px 10px 0 9px; border: 0; border-top: 1px solid #bcbcbc; border-bottom: 1px solid #fafafa; }
.mix { display: grid; grid-template-columns: 82px 82px 83px; padding: 14px 0 0 8px; }
.ch { display: flex; flex-direction: column; align-items: center; text-align: center; }
.fader { width: 24px; height: 50px; margin: 0 0 14px 3px; }
.ch:nth-child(1) .fader { margin-left: 22px; }
.mini { display: flex; gap: 16px; }
.ch input { width: 64px; height: 24px; border: 1px solid #a8a8a8; border-radius: 3px; background: #fafafa; text-align: center; }
.ch p { height: 18px; }
.mini, .ch input { margin-bottom: 6px; }
.status { height: 24px; flex: none; display: flex; align-items: center; padding: 0 2px; }
.status span:last-child { margin-left: 12px; }
</style>
